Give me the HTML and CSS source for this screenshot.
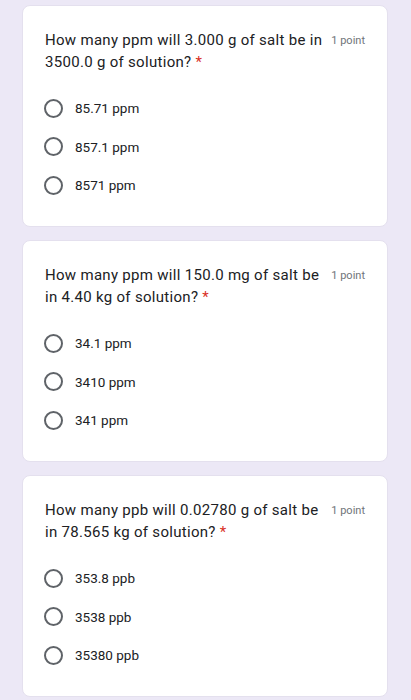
FILE: index.html
```html
<!DOCTYPE html>
<html>
<head>
  <meta charset="UTF-8">
  <title>Quiz</title>
  <link rel="stylesheet" href="styles.css">
</head>
<body>
  <div class="form">
    <div class="card">
      <div class="question">
        <div class="q-text">How many ppm will 3.000 g of salt be in 3500.0 g of solution? <span class="req">*</span></div>
        <div class="points">1 point</div>
      </div>
      <div class="options">
        <label class="option"><span class="radio"></span><span class="opt-text">85.71 ppm</span></label>
        <label class="option"><span class="radio"></span><span class="opt-text">857.1 ppm</span></label>
        <label class="option"><span class="radio"></span><span class="opt-text">8571 ppm</span></label>
      </div>
    </div>
    <div class="card">
      <div class="question">
        <div class="q-text">How many ppm will 150.0 mg of salt be in 4.40 kg of solution? <span class="req">*</span></div>
        <div class="points">1 point</div>
      </div>
      <div class="options">
        <label class="option"><span class="radio"></span><span class="opt-text">34.1 ppm</span></label>
        <label class="option"><span class="radio"></span><span class="opt-text">3410 ppm</span></label>
        <label class="option"><span class="radio"></span><span class="opt-text">341 ppm</span></label>
      </div>
    </div>
    <div class="card">
      <div class="question">
        <div class="q-text">How many ppb will 0.02780 g of salt be in 78.565 kg of solution? <span class="req">*</span></div>
        <div class="points">1 point</div>
      </div>
      <div class="options">
        <label class="option"><span class="radio"></span><span class="opt-text">353.8 ppb</span></label>
        <label class="option"><span class="radio"></span><span class="opt-text">3538 ppb</span></label>
        <label class="option"><span class="radio"></span><span class="opt-text">35380 ppb</span></label>
      </div>
    </div>
  </div>
</body>
</html>
```

FILE: styles.css
```css
html, body {
  margin: 0;
  padding: 0;
  background: #ece8f6;
  font-family: Roboto, 'Liberation Sans', sans-serif;
  color: #202124;
}
.form {
  padding: 5px 23px 0 22px;
}
.card {
  background: #fff;
  border: 1px solid #e4e0ee;
  border-radius: 8px;
  padding: 23px 22px 21px 22px;
  margin-bottom: 13.5px;
}
.question {
  display: flex;
  align-items: flex-start;
}
.q-text {
  flex: 1;
  font-size: 15px;
  line-height: 22px;
  letter-spacing: 0.3px;
}
.req {
  color: #d93025;
  letter-spacing: 0;
}
.points {
  margin-left: 7px;
  margin-top: 5px;
  font-size: 11px;
  line-height: 14px;
  color: #70757a;
  white-space: nowrap;
}
.options {
  margin-top: 16px;
}
.option {
  display: flex;
  align-items: center;
  height: 38.5px;
}
.radio {
  box-sizing: border-box;
  width: 19px;
  height: 19px;
  border: 2px solid #5f6368;
  border-radius: 50%;
  margin-left: -1px;
  margin-right: 12px;
}
.opt-text {
  font-size: 13.5px;
  color: #202124;
}
```
